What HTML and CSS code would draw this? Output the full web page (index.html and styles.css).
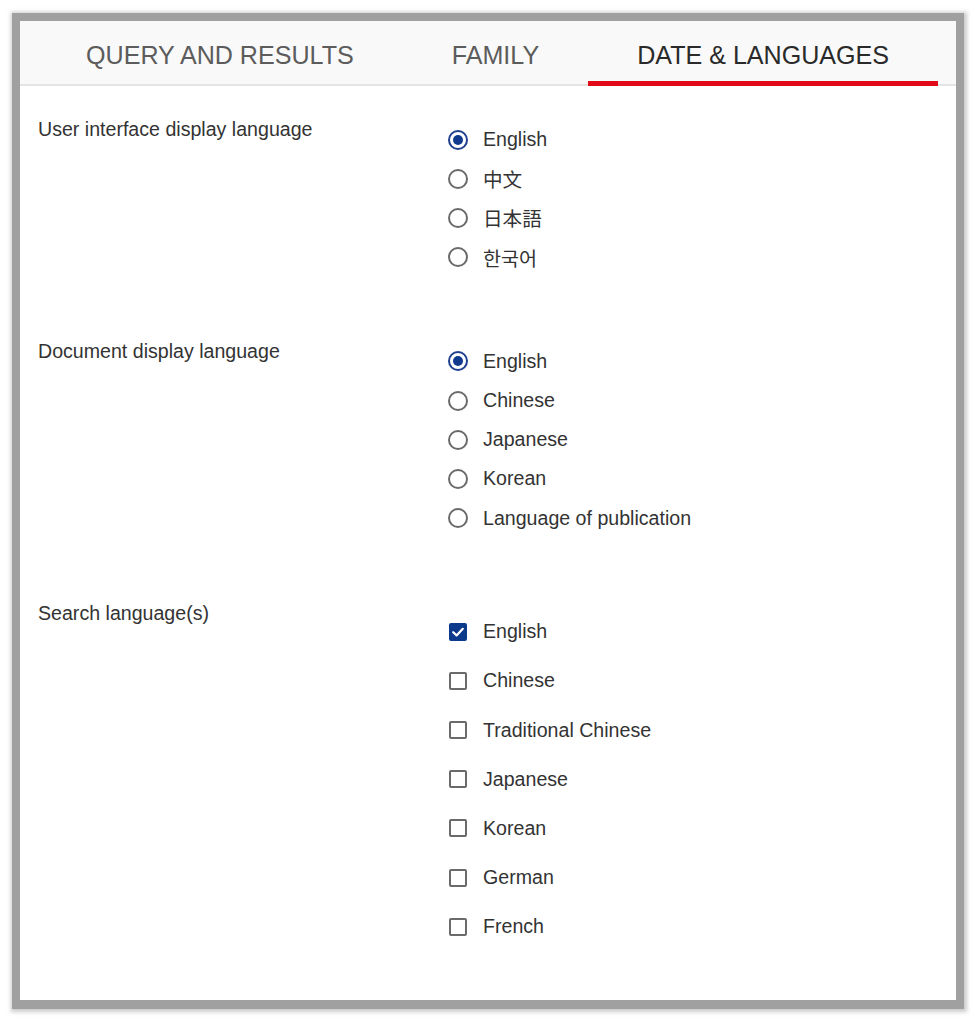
FILE: index.html
```html
<!DOCTYPE html>
<html lang="en">
<head>
<meta charset="utf-8">
<title>Settings</title>
<link rel="stylesheet" href="styles.css">
</head>
<body>
<div class="frame">
<div class="panel">
  <div class="tabs">
    <div class="tab">QUERY AND RESULTS</div>
    <div class="tab">FAMILY</div>
    <div class="tab active">DATE &amp; LANGUAGES</div>
  </div>

  <div class="section first">
    <div class="label">User interface display language</div>
    <div class="options radios">
      <div class="opt"><span class="radio on"></span><span>English</span></div>
      <div class="opt"><span class="radio"></span><span lang="zh">中文</span></div>
      <div class="opt"><span class="radio"></span><span lang="ja">日本語</span></div>
      <div class="opt"><span class="radio"></span><span lang="ko">한국어</span></div>
    </div>
  </div>

  <div class="section">
    <div class="label">Document display language</div>
    <div class="options radios">
      <div class="opt"><span class="radio on"></span><span>English</span></div>
      <div class="opt"><span class="radio"></span><span>Chinese</span></div>
      <div class="opt"><span class="radio"></span><span>Japanese</span></div>
      <div class="opt"><span class="radio"></span><span>Korean</span></div>
      <div class="opt"><span class="radio"></span><span>Language of publication</span></div>
    </div>
  </div>

  <div class="section last">
    <div class="label">Search language(s)</div>
    <div class="options checks">
      <div class="opt"><span class="check on"><svg viewBox="0 0 18 18" width="18" height="18"><path d="M4.2 9.2 L7.6 12.4 L13.8 5.8" fill="none" stroke="#fff" stroke-width="2.2" stroke-linecap="round" stroke-linejoin="round"/></svg></span><span>English</span></div>
      <div class="opt"><span class="check"></span><span>Chinese</span></div>
      <div class="opt"><span class="check"></span><span>Traditional Chinese</span></div>
      <div class="opt"><span class="check"></span><span>Japanese</span></div>
      <div class="opt"><span class="check"></span><span>Korean</span></div>
      <div class="opt"><span class="check"></span><span>German</span></div>
      <div class="opt"><span class="check"></span><span>French</span></div>
    </div>
  </div>
</div>
</div>
</body>
</html>
```
FILE: styles.css
```css
html, body {
  margin: 0;
  padding: 0;
  background: #ffffff;
}
body {
  box-sizing: border-box;
  min-height: 1021px;
  padding: 13px 0 0 12px;
  font-family: "Liberation Sans", Arial, "Noto Sans CJK JP", "Noto Sans CJK SC", "Noto Sans CJK KR", sans-serif;
}
.frame {
  width: 952px;
  box-sizing: border-box;
  padding: 8px 8px 9px 8px;
  background: #a0a0a0;
  box-shadow: 1px 1px 4px 2px rgba(160, 160, 160, 0.55);
}
.panel {
  width: 936px;
  height: 979px;
  box-sizing: border-box;
  background: #ffffff;
}
.tabs {
  display: flex;
  height: 65px;
  box-sizing: border-box;
  padding-left: 17px;
  background: #f9f9f9;
  border-bottom: 2px solid #e4e4e4;
}
.tab {
  position: relative;
  height: 63px;
  box-sizing: border-box;
  padding: 6px 49px 0 49px;
  display: flex;
  align-items: center;
  font-size: 25.1px;
  color: #5c5c5c;
  white-space: nowrap;
}
.tab.active {
  color: #2a2a2a;
}
.tab.active::after {
  content: "";
  position: absolute;
  left: 0;
  right: 0;
  bottom: -2px;
  height: 5px;
  background: #e30a17;
}
.section {
  display: flex;
  align-items: flex-start;
  padding-left: 18px;
  margin-top: 62px;
}
.section.first {
  margin-top: 31px;
}
.section.last {
  margin-top: 63px;
}
.label {
  width: 410px;
  flex: none;
  font-size: 19.6px;
  line-height: 24px;
  color: #333333;
}
.options {
  display: flex;
  flex-direction: column;
}
.radios {
  margin-top: 3px;
}
.checks {
  margin-top: 6.4px;
}
.opt {
  display: flex;
  align-items: center;
  font-size: 19.6px;
  color: #333333;
}
.radios .opt {
  height: 39.2px;
}
.checks .opt {
  height: 49.2px;
}
.radio {
  width: 20px;
  height: 20px;
  box-sizing: border-box;
  border: 2px solid #6a6a6a;
  border-radius: 50%;
  margin-right: 15px;
  display: flex;
  align-items: center;
  justify-content: center;
  flex: none;
}
.radio.on {
  border-color: #1f3f8f;
}
.radio.on::after {
  content: "";
  width: 10px;
  height: 10px;
  border-radius: 50%;
  background: #0f3a8e;
}
.check {
  width: 18px;
  height: 18px;
  box-sizing: border-box;
  border: 2px solid #6a6a6a;
  border-radius: 2px;
  margin-left: 1px;
  margin-right: 16px;
  flex: none;
  display: flex;
  align-items: center;
  justify-content: center;
}
.check.on {
  background: #0b3a8c;
  border-color: #0b3a8c;
}
.check svg {
  display: block;
  width: 18px;
  height: 18px;
  flex: none;
}
```
